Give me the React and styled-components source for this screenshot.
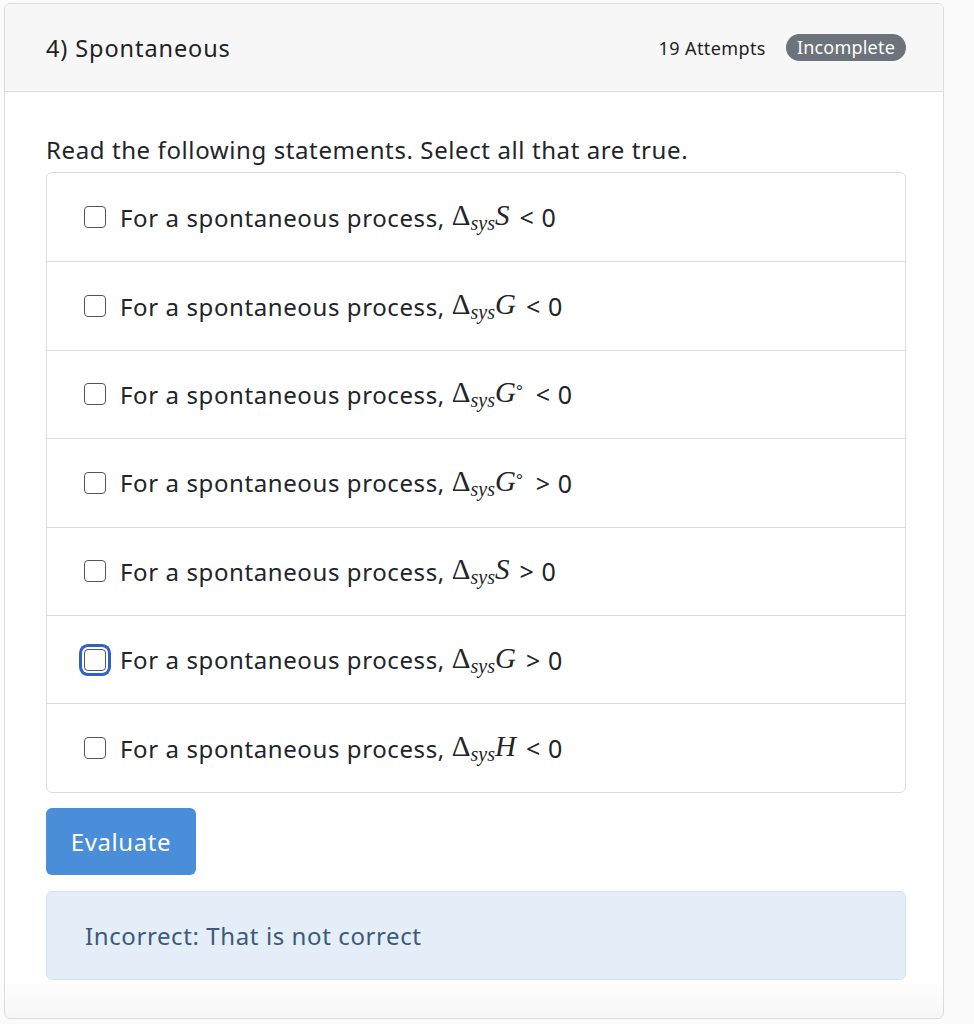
import React from 'react'
import styled, { createGlobalStyle } from 'styled-components'

const GlobalStyle = createGlobalStyle`
  body {
    margin: 0;
    background: #fbfbfc;
    font-family: "Noto Sans", "Open Sans", sans-serif;
    color: #212529;
  }
`

const Page = styled.div`
  padding: 3px 30px 6px 4px;
`

const Card = styled.div`
  border: 1px solid #dcdcdc;
  border-radius: 6px;
  background: linear-gradient(to bottom, #fff 0, #fff 96%, #f6f6f6 100%);
  overflow: hidden;
`

const CardHeader = styled.div`
  display: flex;
  align-items: center;
  justify-content: space-between;
  height: 87px;
  padding: 0 37px 0 41px;
  background: #f7f7f7;
  border-bottom: 1px solid #dcdcdc;
`

const Title = styled.div`
  font-size: 23.5px;
  letter-spacing: 0.9px;
  color: #222;
`

const Meta = styled.div`
  display: flex;
  align-items: center;
  gap: 20px;
  font-size: 18px;
  letter-spacing: 0.4px;
  color: #222;
`

const Badge = styled.span`
  background: #6c737a;
  color: #fff;
  border-radius: 14px;
  padding: 1px 11px 2px;
  font-size: 18px;
  letter-spacing: 0.2px;
`

const CardBody = styled.div`
  padding: 43px 37px 38px 41px;
`

const Prompt = styled.div`
  font-size: 24px;
  line-height: 29px;
  letter-spacing: 0.6px;
  margin-bottom: 8px;
  color: #212529;
`

const List = styled.div`
  border: 1px solid #dcdcdc;
  border-radius: 6px;
  background: #fff;
`

const Item = styled.label`
  display: flex;
  align-items: center;
  box-sizing: border-box;
  height: 88.4px;
  padding-left: 37px;
  font-size: 24px;
  letter-spacing: 0.6px;
  color: #212529;
  & + & {
    border-top: 1px solid #dcdcdc;
  }
`

const Box = styled.span`
  width: 22px;
  height: 22px;
  box-sizing: border-box;
  border: 1.5px solid #555;
  border-radius: 4px;
  margin-right: 14px;
  flex-shrink: 0;
  background: #fff;
  box-shadow: ${p => (p.$focus ? '0 0 0 2px #fff, 0 0 0 5px #2f62c9' : 'none')};
`

const Math = styled.span`
  font-family: "Liberation Serif", "Times New Roman", serif;
  font-size: 29px;
  letter-spacing: 0;
  margin-left: 7px;
  margin-right: 10px;
`

const Sub = styled.sub`
  font-style: italic;
  font-size: 20px;
  vertical-align: -5px;
`

const Var = styled.i`
  font-style: italic;
`

const Deg = styled.sup`
  font-size: 17px;
  font-weight: bold;
  vertical-align: 6px;
  margin-left: 0;
  margin-right: 3px;
`

const Op = styled.span`
  font-size: 25px;
`

const Button = styled.button`
  margin-top: 15px;
  height: 67px;
  width: 150px;
  border: none;
  border-radius: 6px;
  background: #4a8dd8;
  color: #fff;
  font-family: inherit;
  font-size: 24px;
  letter-spacing: 0.6px;
`

const Alert = styled.div`
  margin-top: 16px;
  height: 89px;
  box-sizing: border-box;
  display: flex;
  align-items: center;
  padding-left: 38px;
  background: #e3eef9;
  border: 1px solid #d2e3f5;
  border-radius: 6px;
  color: #3e5a78;
  font-size: 24px;
  letter-spacing: 0.6px;
`

const items = [
  { v: 'S', op: '<' },
  { v: 'G', op: '<' },
  { v: 'G', deg: true, op: '<' },
  { v: 'G', deg: true, op: '>' },
  { v: 'S', op: '>' },
  { v: 'G', op: '>', focus: true },
  { v: 'H', op: '<' },
]

export default function App() {
  return (
    <Page>
      <GlobalStyle />
      <Card>
        <CardHeader>
          <Title>4) Spontaneous</Title>
          <Meta>
            <span>19 Attempts</span>
            <Badge>Incomplete</Badge>
          </Meta>
        </CardHeader>
        <CardBody>
          <Prompt>Read the following statements. Select all that are true.</Prompt>
          <List>
            {items.map((it, i) => (
              <Item key={i}>
                <Box $focus={it.focus} />
                For a spontaneous process,
                <Math>
                  Δ<Sub>sys</Sub>
                  <Var>{it.v}</Var>
                  {it.deg ? <Deg>°</Deg> : null}
                </Math>
                <Op>{it.op} 0</Op>
              </Item>
            ))}
          </List>
          <Button>Evaluate</Button>
          <Alert>Incorrect: That is not correct</Alert>
        </CardBody>
      </Card>
    </Page>
  )
}
